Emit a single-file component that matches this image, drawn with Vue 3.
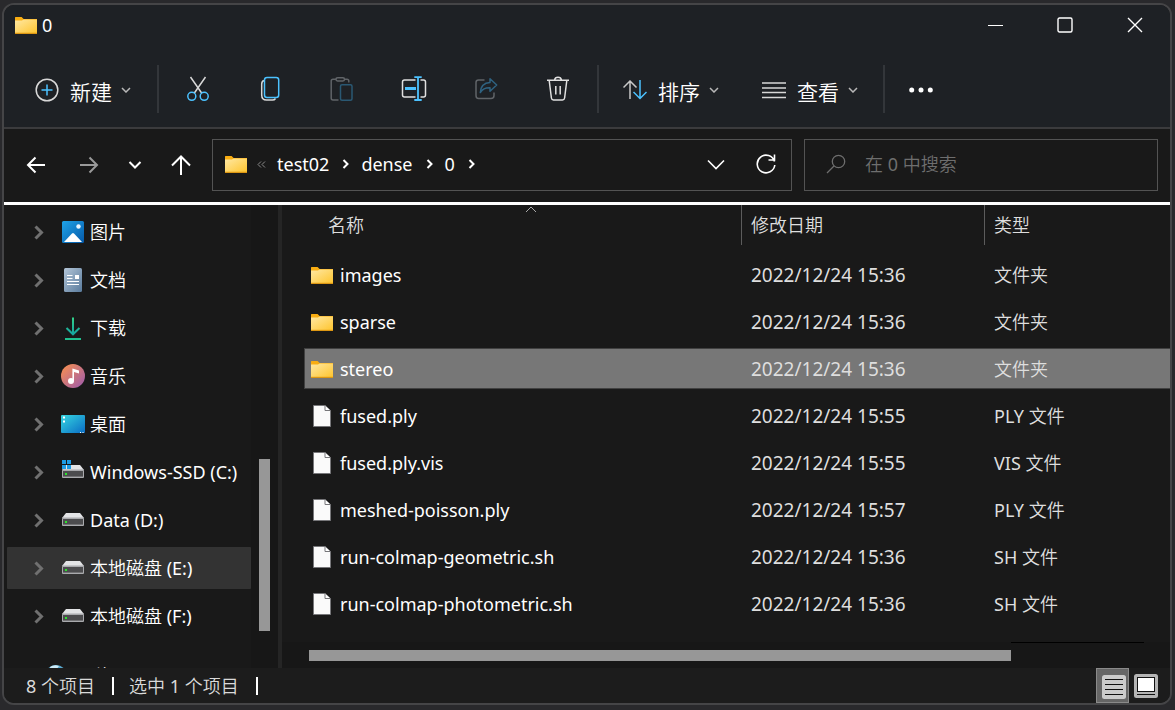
<script setup>
import { ref } from 'vue'

const places = [
  { name: '图片', icon: 'pictures' },
  { name: '文档', icon: 'documents' },
  { name: '下载', icon: 'downloads' },
  { name: '音乐', icon: 'music' },
  { name: '桌面', icon: 'desktop' },
  { name: 'Windows-SSD (C:)', icon: 'system' },
  { name: 'Data (D:)', icon: 'drive' },
  { name: '本地磁盘 (E:)', icon: 'drive' },
  { name: '本地磁盘 (F:)', icon: 'drive' }
]

const files = [
  { name: 'images', date: '2022/12/24 15:36', type: '文件夹', folder: true },
  { name: 'sparse', date: '2022/12/24 15:36', type: '文件夹', folder: true },
  { name: 'stereo', date: '2022/12/24 15:36', type: '文件夹', folder: true },
  { name: 'fused.ply', date: '2022/12/24 15:55', type: 'PLY 文件' },
  { name: 'fused.ply.vis', date: '2022/12/24 15:55', type: 'VIS 文件' },
  { name: 'meshed-poisson.ply', date: '2022/12/24 15:57', type: 'PLY 文件' },
  { name: 'run-colmap-geometric.sh', date: '2022/12/24 15:36', type: 'SH 文件' },
  { name: 'run-colmap-photometric.sh', date: '2022/12/24 15:36', type: 'SH 文件' }
]

const crumbs = ['test02', 'dense', '0']
const currentPlace = ref('本地磁盘 (E:)')
const selected = ref('stereo')
const query = ref('')
</script>

<template>
  <div class="desktop">
    <svg class="defs" aria-hidden="true">
      <defs>
        <linearGradient id="gFolder" x1="0" y1="0" x2="1" y2="1">
          <stop offset="0" stop-color="#ffe8a3" /><stop offset="1" stop-color="#fec52f" />
        </linearGradient>
        <linearGradient id="gPic" x1="0" y1="0" x2="1" y2="1">
          <stop offset="0" stop-color="#1fa3e8" /><stop offset="1" stop-color="#0559a8" />
        </linearGradient>
        <linearGradient id="gDoc" x1="0" y1="0" x2="1" y2="1">
          <stop offset="0" stop-color="#b4c6d8" /><stop offset="1" stop-color="#5a7b9c" />
        </linearGradient>
        <linearGradient id="gDown" gradientUnits="userSpaceOnUse" x1="0" y1="0" x2="0" y2="24">
          <stop offset="0" stop-color="#35d687" /><stop offset="0.75" stop-color="#16a5a0" /><stop offset="1" stop-color="#22c58c" />
        </linearGradient>
        <linearGradient id="gMusic" x1="0" y1="0" x2="1" y2="1">
          <stop offset="0.1" stop-color="#f28c55" /><stop offset="1" stop-color="#9b59b0" />
        </linearGradient>
        <linearGradient id="gDesk" x1="0" y1="0" x2="1" y2="1">
          <stop offset="0" stop-color="#36d6e0" /><stop offset="1" stop-color="#0a6cc4" />
        </linearGradient>
        <symbol id="folder" viewBox="0 0 22 18">
          <path d="M0 1.5Q0 1 .6 1H6.6L8.6 3H22V8H0Z" fill="#f9ad12" />
          <path d="M0 4.6H7L8.6 3.6H22V17H0Z" fill="url(#gFolder)" />
          <path d="M0 17.4H22" stroke="#dd9713" stroke-width="1.2" />
        </symbol>
        <symbol id="file" viewBox="0 0 18 22">
          <path d="M.5 .5H12L17.5 6V21.5H.5Z" fill="#fafafa" stroke="#77777a" />
          <path d="M12 .5V5.5H17.5" fill="#fff" stroke="#77777a" />
        </symbol>
        <symbol id="drive" viewBox="0 0 22 13">
          <path d="M4 0H18L22 5H0Z" fill="#e3e4e6" />
          <rect x="0" y="4.6" width="22" height="8.4" rx="1" fill="#a9aaad" />
          <rect x="1" y="6" width="20" height="5.6" fill="#4c4c4e" />
          <rect x="3" y="8" width="2" height="2" fill="#2be62b" />
        </symbol>
      </defs>
    </svg>

    <main class="window">
      <header class="command">
        <div class="titlebar">
          <svg class="folder-icon"><use href="#folder" /></svg>
          <h1>0</h1>
          <div class="caption">
            <button aria-label="最小化"><svg width="16" height="16"><path d="M1 8.5H16" stroke="#fff" /></svg></button>
            <button aria-label="最大化"><svg width="16" height="16"><rect x="1" y="1" width="14" height="14" rx="1.5" fill="none" stroke="#fff" stroke-width="1.4" /></svg></button>
            <button aria-label="关闭"><svg width="16" height="16"><path d="M1 1L15 15M15 1L1 15" stroke="#fff" stroke-width="1.4" /></svg></button>
          </div>
        </div>

        <div class="toolbar">
          <button class="tool new">
            <svg width="24" height="24" fill="none"><circle cx="12" cy="12" r="10.8" stroke="#d8d8d8" stroke-width="1.5" /><path d="M12 6.5V17.5M6.5 12H17.5" stroke="#4cc2ff" stroke-width="1.5" /></svg>
            <span>新建</span>
            <svg class="drop" width="10" height="6"><path d="M1 1L5 5L9 1" /></svg>
          </button>
          <i class="sep"></i>
          <div class="icons">
            <button aria-label="剪切">
              <svg width="26" height="26" fill="none" stroke-width="1.5"><path d="M5.5 1L16.8 17.2M20.5 1L9.2 17.2" stroke="#d8d8d8" /><circle cx="6.8" cy="20.3" r="4" stroke="#4cc2ff" /><circle cx="19.2" cy="20.3" r="4" stroke="#4cc2ff" /></svg>
            </button>
            <button aria-label="复制">
              <svg width="26" height="26" fill="none" stroke-width="1.5"><path d="M7 4.5Q4.7 5.2 4.7 8V19Q4.7 24 9.5 24H15.5Q17.5 24 18.5 22.5" stroke="#d8d8d8" /><rect x="7.5" y="1.5" width="14.2" height="20" rx="2.5" stroke="#4cc2ff" /></svg>
            </button>
            <button aria-label="粘贴">
              <svg width="26" height="26" fill="none" stroke-width="1.5"><path d="M7 3.2H4Q2.2 3.2 2.2 5V22Q2.2 24 4 24H9.5M16 3.2H18Q19.8 3.2 19.8 5V6.5" stroke="#606468" /><rect x="7" y="1.7" width="8.5" height="3.2" rx="1.6" stroke="#606468" /><rect x="11.5" y="8.8" width="11.5" height="15.4" rx="1.5" stroke="#2a5873" /></svg>
            </button>
            <button aria-label="重命名">
              <svg width="26" height="26" fill="none" stroke-width="1.5"><path d="M14.5 4H3.5Q1.5 4 1.5 6V19Q1.5 21 3.5 21H14.5M19.5 4H22.5Q24.5 4 24.5 6V19Q24.5 21 22.5 21H19.5" stroke="#e0e0e0" /><path d="M4 12.5H15" stroke="#4cc2ff" stroke-width="3" /><path d="M13.3 1.2H20.7M17 1V24M13.3 24H20.7" stroke="#4cc2ff" stroke-width="1.8" /></svg>
            </button>
            <button aria-label="共享">
              <svg width="26" height="26" fill="none" stroke-width="1.5" stroke-linejoin="round"><path d="M11.5 4H5.5Q3 4 3 6.5V19.5Q3 22.5 5.5 22.5H18Q21 22.5 21 19.5V16.5" stroke="#606468" /><path d="M17 2.8L23.7 9L17 15.2V11.8Q10.5 11.5 7.3 16.5Q8 7 17 6.5Z" stroke="#2f6280" /></svg>
            </button>
            <button aria-label="删除">
              <svg width="26" height="26" fill="none" stroke="#e0e0e0" stroke-width="1.5"><path d="M2 4.2H24M4.2 4.5L6.4 22Q6.7 24 8.5 24H17.5Q19.3 24 19.6 22L21.8 4.5M9.5 4Q10 1.2 13 1.2T16.5 4M10.8 10V18.5M15.2 10V18.5" /></svg>
            </button>
          </div>
          <i class="sep"></i>
          <button class="tool sort">
            <svg width="24" height="20" fill="none" stroke-width="1.5"><path d="M7 19V1M.5 7.5L7 1L13.5 7.5" stroke="#c8c8c8" /><path d="M17 0V18.5M10.5 12L17 18.5L23.5 12" stroke="#4cc2ff" /></svg>
            <span>排序</span>
            <svg class="drop" width="10" height="6"><path d="M1 1L5 5L9 1" /></svg>
          </button>
          <button class="tool view">
            <svg width="24" height="18"><path d="M0 2H24M0 7H24M0 11.5H24M0 16.5H24" stroke="#d8d8d8" stroke-width="1.4" /></svg>
            <span>查看</span>
            <svg class="drop" width="10" height="6"><path d="M1 1L5 5L9 1" /></svg>
          </button>
          <i class="sep"></i>
          <button class="tool more" aria-label="更多">
            <svg width="24" height="6" fill="#fff"><circle cx="2.7" cy="3" r="2.5" /><circle cx="12" cy="3" r="2.5" /><circle cx="21.3" cy="3" r="2.5" /></svg>
          </button>
        </div>
      </header>

      <nav class="navbar">
        <div class="history">
          <button class="back" aria-label="后退"><svg width="20" height="18"><path d="M19 9H2M9.5 1.5L2 9L9.5 16.5" /></svg></button>
          <button class="forward" aria-label="前进"><svg width="20" height="18"><path d="M1 9H18M10.5 1.5L18 9L10.5 16.5" /></svg></button>
          <button class="recent" aria-label="最近"><svg width="14" height="8"><path d="M1.5 1L7 6.5L12.5 1" /></svg></button>
          <button class="up" aria-label="向上"><svg width="20" height="20"><path d="M10 20V2M1 10.5L10 1.5L19 10.5" /></svg></button>
        </div>
        <div class="address">
          <svg class="folder-icon"><use href="#folder" /></svg>
          <svg class="quote" width="9" height="7"><path d="M4 .5L1 3.5L4 6.5M8 .5L5 3.5L8 6.5" /></svg>
          <template v-for="c in crumbs" :key="c">
            <button class="crumb">{{ c }}</button>
            <svg class="next" width="8" height="10"><path d="M1.5 1L5.5 5L1.5 9" /></svg>
          </template>
          <button class="expand" aria-label="展开"><svg width="18" height="11"><path d="M1 1.5L9 9.5L17 1.5" /></svg></button>
          <button class="refresh" aria-label="刷新"><svg width="20" height="22"><path d="M18.5 8.5A8.8 8.8 0 1 0 18.8 12M18.5 1.5V7H12.5" /></svg></button>
        </div>
        <label class="search">
          <svg width="20" height="20"><circle cx="12.5" cy="7.5" r="6.2" /><path d="M8 12L1 19" /></svg>
          <input v-model="query" type="text" placeholder="在 0 中搜索" aria-label="搜索" />
        </label>
      </nav>

      <div class="body">
        <aside class="side">
          <ul class="tree">
            <li v-for="p in places" :key="p.name">
              <button class="place" :class="{ current: p.name === currentPlace }" @click="currentPlace = p.name">
                <svg class="chev" width="11" height="16"><path d="M1.5 2.5L7.5 8.5L1.5 14.5" /></svg>
                <svg v-if="p.icon === 'pictures'" class="picon" viewBox="0 0 24 24">
                  <rect x="1" y="1" width="22" height="22" rx="1.5" fill="url(#gPic)" /><circle cx="17.5" cy="6.5" r="2.2" fill="#e8f6ff" /><path d="M3 22L11 13.5Q12 12.5 13 13.5L21 22Z" fill="#fff" />
                </svg>
                <svg v-else-if="p.icon === 'documents'" class="picon" viewBox="0 0 24 24">
                  <rect x="3" y="0" width="18" height="24" rx="1.5" fill="url(#gDoc)" /><path d="M6 7.5H11.5M6 10.5H11.5M6 13.5H18M6 16.5H18" stroke="#fff" stroke-width="1.2" /><rect x="14" y="7" width="4" height="4" fill="#fff" />
                </svg>
                <svg v-else-if="p.icon === 'downloads'" class="picon" viewBox="0 0 24 24" fill="none" stroke="url(#gDown)" stroke-width="2">
                  <path d="M12 1.5V18L11.9 18.1M5.5 12L12 18.3L18.5 12M4 23L20 22.9" />
                </svg>
                <svg v-else-if="p.icon === 'music'" class="picon" viewBox="0 0 24 24">
                  <circle cx="12" cy="12" r="12" fill="url(#gMusic)" /><circle cx="10" cy="17" r="3" fill="#fff" /><path d="M11.4 17V4.5L18 6.5V9.5L13 8V17Z" fill="#fff" />
                </svg>
                <svg v-else-if="p.icon === 'desktop'" class="picon" viewBox="0 0 24 24">
                  <rect x="0" y="3" width="24" height="18" rx="1" fill="url(#gDesk)" /><path d="M2 5.5H4M2 9.5H4" stroke="#fff" stroke-width="2" /><path d="M19 20.5H20M21.5 20.5H22.5" stroke="#fff" />
                </svg>
                <svg v-else-if="p.icon === 'system'" class="picon" viewBox="0 0 24 24">
                  <use href="#drive" x="1" y="5" width="22" height="13" /><path d="M1 0H5V4H1ZM6 0H10V4H6ZM1 5H5V9H1ZM6 5H10V9H6Z" fill="#1c9ce6" />
                </svg>
                <svg v-else class="picon" viewBox="0 0 24 24"><use href="#drive" x="1" y="5" width="22" height="13" /></svg>
                <span>{{ p.name }}</span>
              </button>
            </li>
            <li class="network">
              <button class="place">
                <svg class="picon" viewBox="0 0 24 24"><circle cx="12" cy="12" r="11" fill="#5aa9cf" /><path d="M6 3Q10 0 15 2L12 6L7 8Z" fill="#cdebf7" /></svg>
                <span>网络</span>
              </button>
            </li>
          </ul>
          <div class="vtrack"><div class="vthumb"></div></div>
        </aside>

        <section class="pane">
          <table class="files">
            <thead>
              <tr>
                <th scope="col">名称<svg class="asc" width="12" height="7"><path d="M1 6L6 1L11 6" /></svg></th>
                <th scope="col">修改日期</th>
                <th scope="col">类型</th>
              </tr>
            </thead>
            <tbody>
              <tr v-for="f in files" :key="f.name" :class="{ selected: f.name === selected }" @click="selected = f.name">
                <td class="name">
                  <span class="slot">
                    <svg v-if="f.folder" class="folder-icon"><use href="#folder" /></svg>
                    <svg v-else class="file-icon"><use href="#file" /></svg>
                  </span>
                  {{ f.name }}
                </td>
                <td class="date">{{ f.date }}</td>
                <td>{{ f.type }}</td>
              </tr>
            </tbody>
          </table>
          <div class="htrack"><div class="hthumb"></div><div class="hline"></div></div>
        </section>
      </div>

      <footer class="status">
        <span>8 个项目</span><i></i><span>选中 1 个项目</span><i></i>
        <div class="modes">
          <button class="mode on" aria-label="详细信息">
            <svg width="24" height="24"><rect width="24" height="24" rx="2.5" fill="#cbcbcb" /><path d="M3 4.5H21M3 9.5H21M3 14.5H21M3 19.5H21" stroke="#111" /></svg>
          </button>
          <button class="mode" aria-label="大图标">
            <svg width="24" height="24"><rect width="24" height="24" rx="2.5" fill="#b4b4b4" /><rect x="3.5" y="3.5" width="17" height="14" fill="#fff" stroke="#111" /><path d="M3 20.5H21" stroke="#111" /></svg>
          </button>
        </div>
      </footer>
    </main>
  </div>
</template>

<style>
body { margin: 0; background: #29292c; }
</style>

<style scoped>
* { box-sizing: border-box; }
.desktop {
  height: 100vh;
  display: flex;
  padding: 3px 3px 5px 2px;
  font: 400 18px/24px "Noto Sans", "Noto Sans CJK SC DemiLight", "Noto Sans CJK SC Light", "Noto Sans CJK SC", sans-serif;
  color: #fff;
}
.defs { position: absolute; width: 0; height: 0; }
.window {
  flex: 1;
  min-width: 0;
  display: flex;
  flex-direction: column;
  border: 2px solid #454547;
  border-radius: 12px;
  background: #191919;
  overflow: hidden;
}
svg { display: block; flex: none; }
button {
  font: inherit;
  color: inherit;
  background: none;
  border: 0;
  padding: 0;
  display: flex;
  align-items: center;
  justify-content: center;
}
.folder-icon { width: 22px; height: 18px; }
.file-icon { width: 18px; height: 22px; }

.command { background: #1e2125; border-bottom: 2px solid #3b3b3d; }
.titlebar { height: 40px; display: flex; align-items: center; padding-left: 11px; gap: 5px; }
h1 { margin: 0; font-size: 18px; font-weight: inherit; }
.caption { margin-left: auto; display: flex; align-self: stretch; }
.caption button { width: 70px; }

.toolbar { height: 82px; padding-top: 6px; display: flex; align-items: center; }
.sep { width: 2px; height: 48px; background: #33363a; }
.tool { height: 48px; justify-content: flex-start; font-size: 21px; font-weight: 300; }
.toolbar .tool { padding-top: 2px; }
.tool span { margin: 4px 9px 0 11px; }
.new { width: 153px; padding-left: 31px; }
.sort { padding: 0 24px; }
.view { padding: 0 25px 0 19px; }
.more { padding: 0 24px; }
.drop { fill: none; stroke: #b8b8b8; stroke-width: 1.5; }
.icons { display: flex; padding: 0 3px; }
.icons button { width: 72px; height: 48px; }

.navbar { display: flex; padding: 10px 12px 11px 6px; border-bottom: 3px solid #fff; }
.navbar svg:not(.folder-icon) { fill: none; stroke: #fff; stroke-width: 2; }
.history { display: flex; margin-right: 4px; }
.back { width: 52px; }
.forward { width: 54px; }
.navbar .forward svg { stroke: #9a9a9a; }
.recent { width: 38px; }
.up { width: 54px; }
.address, .search { height: 52px; border: 1px solid #535353; display: flex; align-items: center; min-width: 0; padding-bottom: 2px; }
.address { flex: 580 1 580px; margin-right: 12px; padding-left: 12px; padding-right: 15px; }
.navbar svg.quote { margin: 0 11px 0 10px; stroke: #8a8a8a; stroke-width: 1; }
.next { margin: 0 11px 0 13px; }
.expand { margin-left: auto; margin-right: 31px; }
.navbar .expand svg, .navbar .refresh svg { stroke-width: 1.6; }
.search { flex: 354 1 354px; padding-left: 21px; padding-right: 12px; gap: 19px; }
.navbar .search svg { stroke: #6e6e6e; stroke-width: 1.3; }
.search input { flex: 1; min-width: 0; font: inherit; color: #fff; background: none; border: 0; padding: 0; outline: 0; }
.search input::placeholder { color: #6e6e6e; opacity: 1; }

.body { flex: 1; min-height: 0; display: flex; }
.side { width: 278px; flex: none; display: flex; border-right: 4px solid #252525; overflow: hidden; }
.tree { flex: 1; list-style: none; margin: 0; padding: 6px 0 0 3px; display: flex; flex-direction: column; gap: 6px; }
.place { width: 100%; height: 42px; justify-content: flex-start; padding-left: 27px; white-space: nowrap; border-radius: 1px; }
.place.current { background: #333; }
.chev { fill: none; stroke: #707070; stroke-width: 3; margin-right: 16px; }
.picon { width: 24px; height: 24px; margin-right: 5px; }
.network { margin-top: 12px; }
.network .place { padding-left: 37px; }
.network .picon { margin-right: 8px; }
.vtrack { width: 27px; display: grid; grid-template-rows: 254fr 172fr 37fr; justify-content: center; background: #171717; }
.vthumb { grid-row: 2; width: 11px; background: #979797; }

.pane { flex: 1; min-width: 0; display: flex; flex-direction: column; }
.files { display: block; flex: 1; margin-left: 22px; }
thead, tbody { display: block; }
thead tr { display: grid; grid-template-columns: 421px 243px 1fr; margin-left: 16px; }
th { position: relative; font-weight: inherit; text-align: left; color: #dedede; height: 40px; line-height: 40px; padding: 0 0 0 9px; border-left: 1px solid #5c5c5c; }
th:first-child { border: 0; padding-left: 8px; }
.asc { position: absolute; top: 1px; left: 50%; margin-left: -6px; fill: none; stroke: #a8a8a8; }
tbody { padding-top: 9px; }
tbody tr { display: grid; grid-template-columns: 437px 243px 1fr; height: 41px; margin-bottom: 6px; border: 1px solid transparent; border-right: 0; }
tbody tr.selected { background: #777; border-color: #414141; }
td { padding: 0 0 0 9px; display: flex; align-items: center; color: #dedede; white-space: nowrap; }
td.name { color: #fff; padding-left: 5px; }
td.date { font-size: 19px; }
.slot { width: 24px; margin-right: 6px; display: flex; justify-content: center; }
.htrack { height: 26px; background: #171717; display: grid; grid-template-columns: 27fr 702fr 133fr 26fr; }
.hthumb { grid-column: 2; height: 11px; margin-top: 8px; background: #979797; }
.hline { height: 1px; background: #000; }

.status { height: 35px; flex: none; background: #1c1c1c; display: flex; align-items: center; padding: 0 12px 0 22px; color: #dadada; }
.status i { width: 2px; height: 18px; background: #fff; margin: 0 15px 0 17px; }
.modes { margin-left: auto; display: flex; gap: 5px; align-self: stretch; }
.mode.on { width: 33px; padding-top: 2px; padding-left: 2px; background: #666; border: 1px solid #8a8a8a; }
</style>
